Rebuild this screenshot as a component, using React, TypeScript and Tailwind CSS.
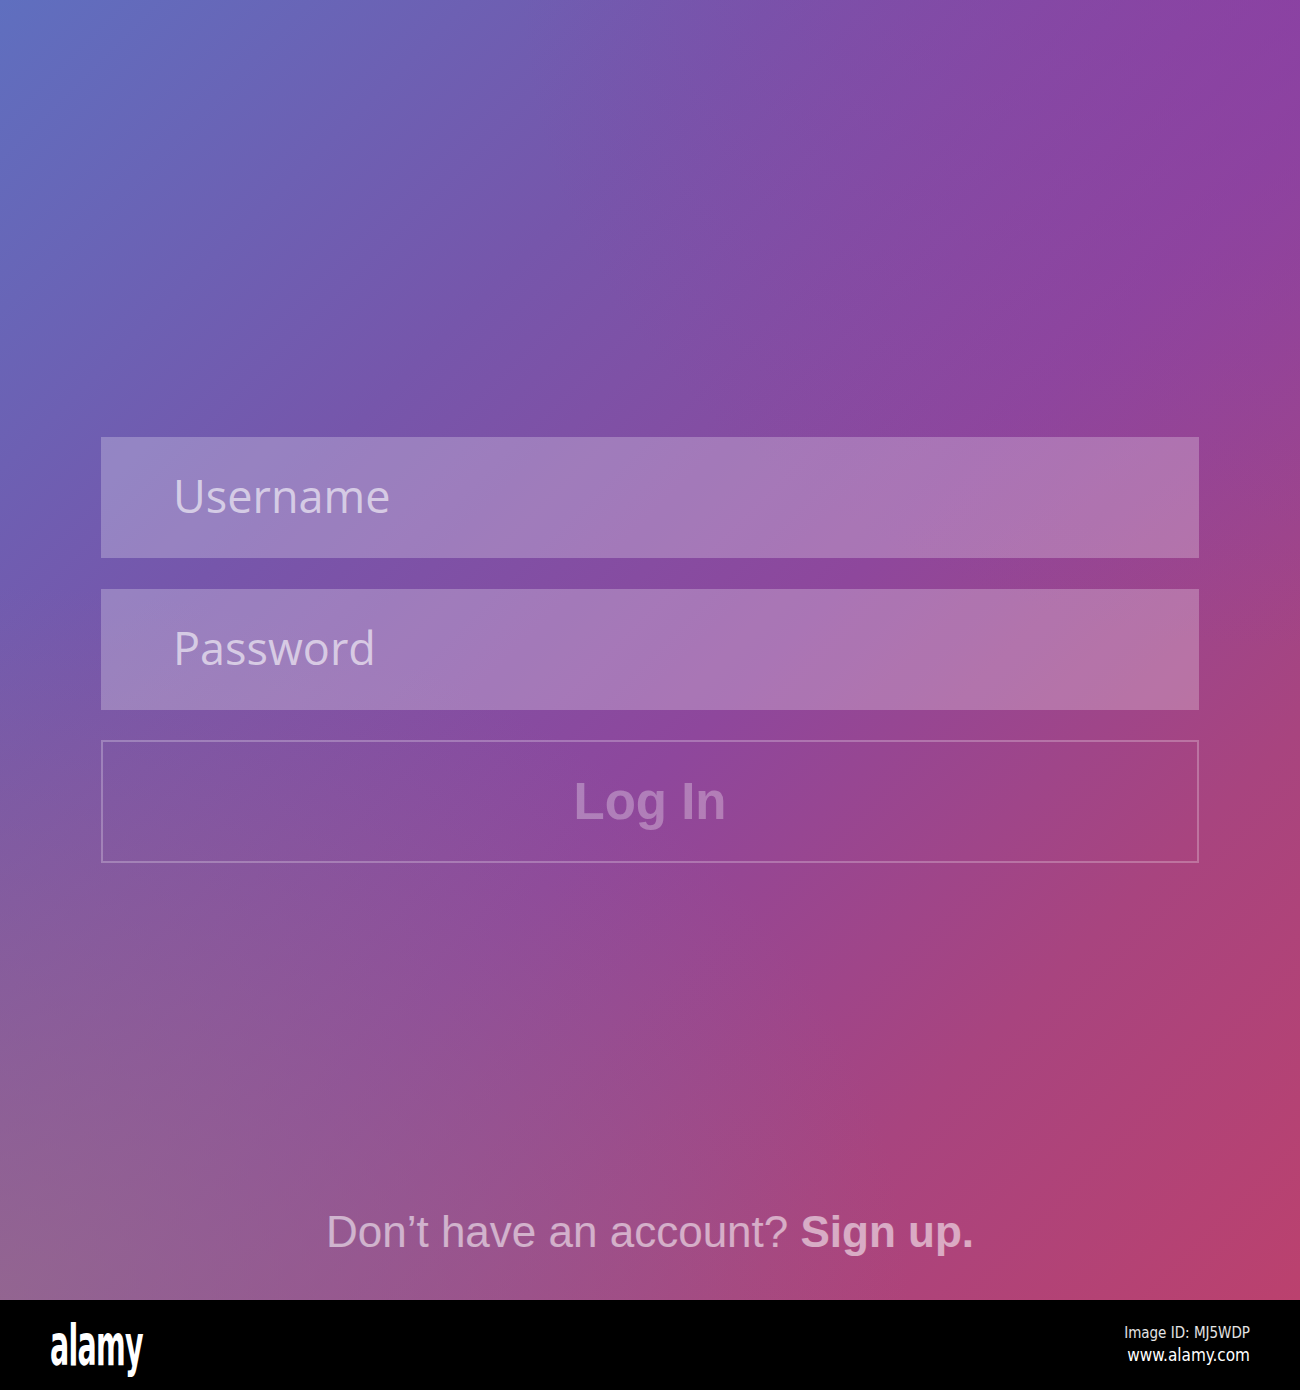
export default function App() {
  return (
    <div className="w-[1300px] h-[1390px] flex flex-col bg-black">
      {/* Login screen */}
      <div className="relative h-[1300px] w-full overflow-hidden bg-[linear-gradient(135deg,#5f6fbf_0%,#7656ab_30%,#8e479c_55%,#a8447f_78%,#bb416e_100%)]">
        <div className="absolute inset-0 bg-[radial-gradient(ellipse_70%_55%_at_0%_100%,rgba(150,110,140,0.75),rgba(150,110,140,0)_100%)]" />
        <div className="absolute inset-0 bg-[radial-gradient(ellipse_60%_50%_at_100%_0%,rgba(140,60,165,0.6),rgba(140,60,165,0)_100%)]" />

        <div className="relative flex h-full flex-col px-[101px] pt-[437px] font-['Open_Sans',sans-serif]">
          <div className="flex h-[121px] items-center bg-white/25 pl-[72px] pb-[4px]">
            <span className="text-[45px] leading-none text-white/60">Username</span>
          </div>
          <div className="mt-[31px] flex h-[121px] items-center bg-white/25 pl-[72px] pb-[4px]">
            <span className="text-[45px] leading-none text-white/60">Password</span>
          </div>
          <button className="mt-[30px] flex h-[123px] items-center justify-center border-2 border-white/25 font-['Liberation_Sans',Arial,sans-serif] text-[51px] font-bold leading-none text-white/30">
            Log In
          </button>

          <p className="mt-[347px] text-center font-['Liberation_Sans',Arial,sans-serif] text-[44px] leading-none text-white/55">
            Don’t have an account? <span className="font-bold">Sign up.</span>
          </p>
        </div>
      </div>

      {/* Bottom strip */}
      <div className="flex h-[90px] items-center justify-between bg-black pl-[50px] pr-[50px] text-white">
        <span className="inline-block origin-left scale-x-[0.72] scale-y-[1.3] font-['DejaVu_Sans_Condensed',sans-serif] text-[44px] font-bold leading-none tracking-[-1px]">
          alamy
        </span>
        <div className="flex flex-col items-end gap-[6px] font-['DejaVu_Sans_Condensed',sans-serif]">
          <span className="text-[15px] leading-none text-white/90">Image ID: MJ5WDP</span>
          <span className="text-[17px] leading-none">www.alamy.com</span>
        </div>
      </div>
    </div>
  );
}
